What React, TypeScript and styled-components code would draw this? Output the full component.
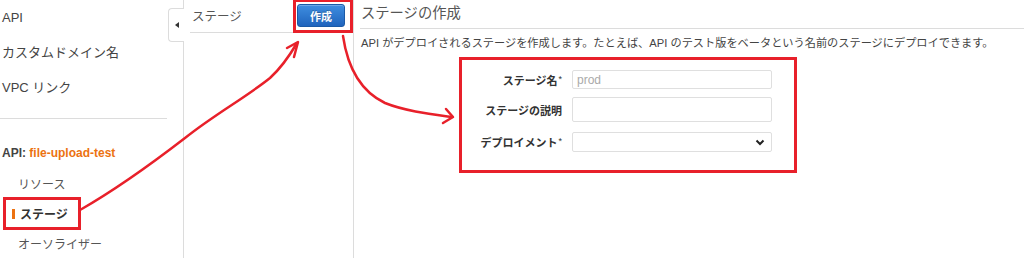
import React from "react";
import styled, { createGlobalStyle } from "styled-components";

const Global = createGlobalStyle`
  html, body { margin: 0; padding: 0; background: #fff; }
  body {
    width: 1024px; height: 258px; overflow: hidden;
    font-family: "Liberation Sans", "Noto Sans CJK JP", Arial, sans-serif;
    color: #444;
  }
`;

const RED = "#e8202a";

const Page = styled.div`
  position: relative;
  display: flex;
  width: 1024px;
  height: 258px;
  overflow: hidden;
`;

const Sidebar = styled.nav`
  position: relative;
  width: 183px;
  flex: none;
  border-right: 1px solid #dcdcdc;
  display: flex;
  flex-direction: column;
`;

const TopItem = styled.div`
  height: 35px;
  line-height: 35px;
  font-size: 13px;
  padding-left: 2px;
  color: #444;
`;

const Divider = styled.hr`
  margin: 13px 0 0 0;
  width: 167px;
  border: none;
  border-top: 1px solid #dcdcdc;
`;

const ApiLabel = styled.div`
  margin-top: 19px;
  height: 30px;
  line-height: 30px;
  font-size: 12px;
  font-weight: bold;
  padding-left: 2px;
  color: #444;
  span { color: #ec7211; }
`;

const SubItem = styled.div<{ $active?: boolean }>`
  position: relative;
  height: 30px;
  display: flex;
  align-items: center;
  font-size: 12px;
  padding-left: ${(p) => (p.$active ? "20px" : "18px")};
  color: ${(p) => (p.$active ? "#333" : "#555")};
  font-weight: ${(p) => (p.$active ? "bold" : "normal")};
  &::before {
    content: "";
    display: ${(p) => (p.$active ? "block" : "none")};
    position: absolute;
    left: 12px;
    top: 11px;
    width: 3px;
    height: 10px;
    background: #ec7211;
  }
`;

const Annotation = styled.div`
  position: absolute;
  border: 3px solid ${RED};
  pointer-events: none;
`;

const CollapseTab = styled.div`
  position: absolute;
  right: -1px;
  top: 8px;
  width: 15px;
  height: 32px;
  background: #fff;
  border: 1px solid #dcdcdc;
  border-right: none;
  border-radius: 4px 0 0 4px;
  display: flex;
  align-items: center;
  justify-content: center;
  &::after {
    content: "";
    width: 0;
    height: 0;
    border-top: 3px solid transparent;
    border-bottom: 3px solid transparent;
    border-right: 4px solid #333;
  }
`;

const Middle = styled.section`
  width: 169px;
  flex: none;
  border-right: 1px solid #dcdcdc;
`;

const MiddleHeader = styled.div`
  margin-left: 6px;
  height: 32px;
  border-bottom: 1px solid #dcdcdc;
  display: flex;
  justify-content: space-between;
  align-items: flex-start;
`;

const MiddleTitle = styled.div`
  padding-left: 2px;
  line-height: 34px;
  font-size: 12.5px;
  color: #555;
`;

const ButtonFrame = styled.div`
  margin-top: -1px;
  width: 53px;
  height: 26px;
  border: 3px solid ${RED};
  display: flex;
  padding: 2px 0 0 1px;
`;

const CreateButton = styled.button`
  width: 48px;
  height: 23px;
  border: 1px solid #1b5aa6;
  border-radius: 3px;
  background: linear-gradient(#3f8ee0, #1f64bd);
  color: #fff;
  font-family: "Liberation Sans", "Noto Sans CJK JP", sans-serif;
  font-size: 11px;
  font-weight: bold;
  padding: 0;
  text-shadow: 0 -1px 0 rgba(0,0,0,0.25);
  box-shadow: inset 0 1px 0 rgba(255,255,255,0.25);
`;

const Main = styled.main`
  flex: 1;
  display: flex;
  flex-direction: column;
`;

const MainTitle = styled.h1`
  margin: 0 0 0 6px;
  height: 28px;
  line-height: 27px;
  padding-left: 1px;
  font-size: 14.3px;
  font-weight: normal;
  color: #555;
  border-bottom: 1px solid #dcdcdc;
`;

const Description = styled.p`
  margin: 6px 0 0 7px;
  font-size: 11.2px;
  line-height: 16px;
  color: #444;
  white-space: nowrap;
`;

const FormBox = styled.div`
  margin: 6px 0 0 105px;
  border: 3px solid ${RED};
  padding: 10px 0 0 0;
  box-sizing: border-box;
  height: 116px;
  width: 338px;
  display: grid;
  grid-template-columns: 100px 200px;
  column-gap: 10px;
  align-content: start;
`;

const FieldLabel = styled.label<{ $mt?: number }>`
  margin-top: ${(p) => p.$mt ?? 0}px;
  display: flex;
  align-items: center;
  justify-content: flex-end;
  font-size: 11px;
  font-weight: bold;
  color: #333;
  sup { font-size: 9px; font-weight: normal; margin-left: 1px; position: relative; top: -1px; }
`;

const Field = styled.div<{ $h: number; $mt?: number }>`
  margin-top: ${(p) => p.$mt ?? 0}px;
  height: ${(p) => p.$h}px;
  box-sizing: border-box;
  border: 1px solid #dfdfdf;
  border-radius: 2px;
  display: flex;
  align-items: center;
  justify-content: space-between;
  padding: 0 6px 0 4px;
  font-size: 12px;
  color: #aaa;
  background: #fff;
`;

const Arrows = styled.svg`
  position: absolute;
  left: 0;
  top: 0;
  pointer-events: none;
`;

export default function App() {
  return (
    <>
      <Global />
      <Page>
        <Sidebar>
          <TopItem>API</TopItem>
          <TopItem>カスタムドメイン名</TopItem>
          <TopItem>VPC リンク</TopItem>
          <Divider />
          <ApiLabel>
            API: <span>file-upload-test</span>
          </ApiLabel>
          <SubItem>リソース</SubItem>
          <SubItem $active>ステージ</SubItem>
          <SubItem>オーソライザー</SubItem>
          <Annotation style={{ left: 3, top: 197, width: 72, height: 27 }} />
          <CollapseTab />
        </Sidebar>
        <Middle>
          <MiddleHeader>
            <MiddleTitle>ステージ</MiddleTitle>
            <ButtonFrame>
              <CreateButton>作成</CreateButton>
            </ButtonFrame>
          </MiddleHeader>
        </Middle>
        <Main>
          <MainTitle>ステージの作成</MainTitle>
          <Description>
            API がデプロイされるステージを作成します。たとえば、API のテスト版をベータという名前のステージにデプロイできます。
          </Description>
          <FormBox>
            <FieldLabel>
              ステージ名<sup>*</sup>
            </FieldLabel>
            <Field $h={19}>prod</Field>
            <FieldLabel $mt={8}>ステージの説明</FieldLabel>
            <Field $h={25} $mt={8} />
            <FieldLabel $mt={10}>
              デプロイメント<sup>*</sup>
            </FieldLabel>
            <Field $h={20} $mt={10}>
              <span />
              <svg width="10" height="7" viewBox="0 0 10 7">
                <path d="M1.5 1.5 L5 5 L8.5 1.5" fill="none" stroke="#222" strokeWidth="2" />
              </svg>
            </Field>
          </FormBox>
        </Main>
        <Arrows width="1024" height="258" viewBox="0 0 1024 258">
          <g fill="none" stroke={RED} strokeWidth="2.5" strokeLinecap="round" strokeLinejoin="round">
            <path d="M80 210 C 115 190, 150 165, 185 138 C 215 114, 245 98, 270 78 C 282 67, 290 55, 297 43" />
            <path d="M287 48 L298 42 L294 57" />
            <path d="M343 36 C 348 70, 362 92, 385 103 C 405 111, 430 114, 452 117" />
            <path d="M446 109 L453 117 L443 123" />
          </g>
        </Arrows>
      </Page>
    </>
  );
}
